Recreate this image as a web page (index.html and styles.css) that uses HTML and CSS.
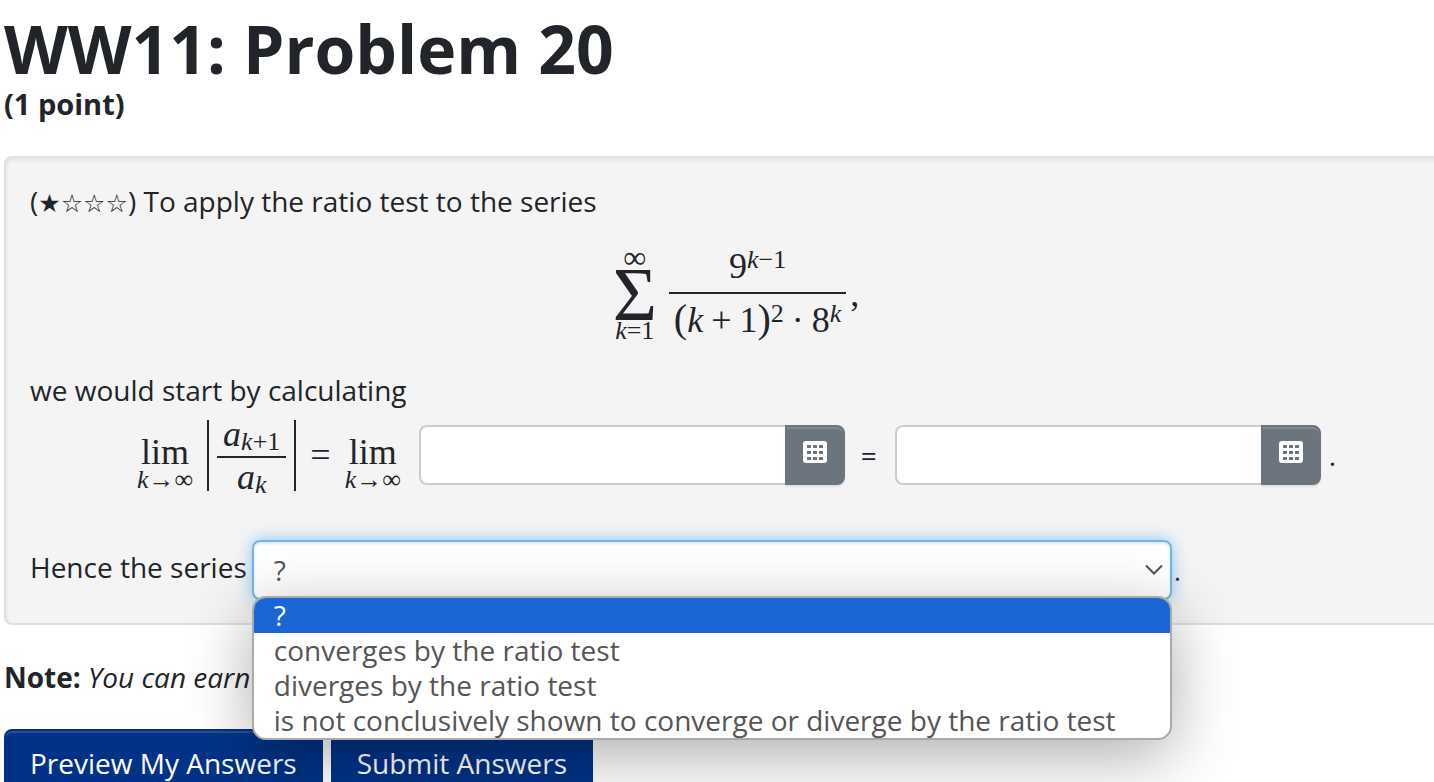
FILE: index.html
```html
<!DOCTYPE html>
<html lang="en">

<head>
  <meta charset="UTF-8" />
  <meta name="viewport" content="width=device-width, initial-scale=1.0" />
  <title>WW11: Problem 20</title>
  <link rel="stylesheet" href="styles.css">
</head>

<body>

  <main class="page">
    <h1 class="page-title">WW11: Problem 20</h1>
    <p class="points">(1 point)</p>

    <form id="problemForm">
      <section class="problem">
        <p>(<span class="stars">★☆☆☆</span>) To apply the ratio test to the series</p>

        <div class="equation" role="math">
          <span class="stack">
            <span class="limit infinity">∞</span>
            <span class="sigma">Σ</span>
            <span class="limit"><i>k</i>=1</span>
          </span>
          <span class="fraction series">
            <span class="numerator">9<sup><i>k</i>−1</sup></span>
            <span class="denominator"><span class="paren">(</span><i>k</i><span class="op">+</span>1<span class="paren">)</span><sup>2</sup><span class="op">·</span>8<sup><i>k</i></sup></span>
          </span>
          <span class="comma">,</span>
        </div>

        <p>we would start by calculating</p>

        <div class="answer-row">
          <span class="math" role="math">
            <span class="stack">
              <span class="lim">lim</span>
              <span class="limit"><i>k</i>→∞</span>
            </span>
            <span class="fraction ratio">
              <span class="numerator"><i>a</i><sub><i>k</i>+1</sub></span>
              <span class="denominator"><i>a</i><sub><i>k</i></sub></span>
            </span>
            <span class="equals">=</span>
            <span class="stack">
              <span class="lim">lim</span>
              <span class="limit"><i>k</i>→∞</span>
            </span>
          </span>
          <span class="input-group">
            <input type="text" id="answer1" aria-label="answer 1" autocomplete="off">
            <button type="button" class="keypad" aria-label="equation editor 1">
              <svg viewBox="0 0 24 22" width="24" height="22"><rect width="24" height="22" rx="3" fill="#fff" /><path d="M4 5.5h4M10 5.5h4M16 5.5h4M4 11.5h4M10 11.5h4M16 11.5h4M4 17.5h4M10 17.5h4M16 17.5h4" stroke="#6c757d" stroke-width="3" /></svg>
            </button>
          </span>
          <span class="between">=</span>
          <span class="input-group">
            <input type="text" id="answer2" aria-label="answer 2" autocomplete="off">
            <button type="button" class="keypad" aria-label="equation editor 2">
              <svg viewBox="0 0 24 22" width="24" height="22"><rect width="24" height="22" rx="3" fill="#fff" /><path d="M4 5.5h4M10 5.5h4M16 5.5h4M4 11.5h4M10 11.5h4M16 11.5h4M4 17.5h4M10 17.5h4M16 17.5h4" stroke="#6c757d" stroke-width="3" /></svg>
            </button>
          </span>
          <span class="period">.</span>
        </div>

        <div class="choice-row">
          <label for="answer3">Hence the series</label>
          <div class="select-wrap">
            <select id="answer3" class="choice">
              <option>?</option>
              <option>converges by the ratio test</option>
              <option>diverges by the ratio test</option>
              <option>is not conclusively shown to converge or diverge by the ratio test</option>
            </select>
            <svg class="chevron" viewBox="0 0 18 12" width="18" height="12"><path d="M1 1.5l8 8 8-8" fill="none" stroke="#555" stroke-width="2" /></svg>
            <ul class="menu" role="listbox">
              <li class="selected" role="option" aria-selected="true">?</li>
              <li role="option">converges by the ratio test</li>
              <li role="option">diverges by the ratio test</li>
              <li role="option">is not conclusively shown to converge or diverge by the ratio test</li>
            </ul>
          </div>
          <span>.</span>
        </div>
      </section>

      <p class="note"><b>Note:</b> <em>You can earn</em></p>

      <div class="buttons">
        <button type="submit" class="btn">Preview My Answers</button>
        <button type="submit" class="btn">Submit Answers</button>
      </div>
    </form>
  </main>

</body>

</html>
```
FILE: styles.css
```css
:root {
  --text: #212529;
  --panel: #f4f4f4;
  --border: #e0e0e0;
  --input-border: #ccc;
  --primary: #003388;
  --secondary: #6c757d;
  --focus: #70b5ef;
}

* {
  box-sizing: border-box;
}

body {
  margin: 0;
  overflow: hidden;
  background: #fff;
  color: var(--text);
  font-family: "Open Sans", "Noto Sans", sans-serif;
  font-size: 28px;
  line-height: 44px;
}

p {
  margin: 0;
}

.page {
  padding: 12px 0 0 4px;
}

.page-title {
  margin: 0;
  font-size: 66px;
  line-height: 72px;
  font-weight: 700;
}

.points {
  font-size: 29px;
  line-height: 40px;
  font-weight: 700;
}

/* the panel runs on past the right edge of the window */
.problem {
  margin: 32px -34px 0 0;
  padding: 21px 24px 23px;
  background: var(--panel);
  border: 2px solid var(--border);
  border-radius: 8px;
  box-shadow: inset 0 2px 4px rgba(0, 0, 0, 0.08);
}

.stars {
  font-family: "DejaVu Sans", sans-serif;
  font-size: 25px;
}

.equation,
.math {
  display: flex;
  align-items: center;
  font-family: "Liberation Serif", serif;
  font-size: 36px;
  line-height: 36px;
}

.equation {
  justify-content: center;
  gap: 12px;
  height: 136px;
  margin-bottom: 6px;
}

.equation sup,
.math sub {
  font-size: 26px;
  line-height: 0;
}

.equation sup {
  vertical-align: 10px;
}

.math sub {
  vertical-align: -4px;
}

.stack {
  display: flex;
  flex-direction: column;
  align-items: center;
}

.limit {
  font-size: 26px;
  line-height: 24px;
}

.infinity {
  font-size: 32px;
}

.sigma {
  font-size: 76px;
  line-height: 50px;
}

.fraction {
  display: flex;
  flex-direction: column;
  text-align: center;
}

.series .numerator {
  padding-bottom: 8px;
  border-bottom: 2px solid;
}

.series .denominator {
  padding: 8px 5px 2px;
}

.paren {
  font-size: 40px;
  line-height: 0;
}

.op {
  padding: 0 8px;
}

.comma {
  margin-left: -8px;
}

.math {
  gap: 14px;
}

.math .stack {
  padding-top: 18px;
}

.lim {
  line-height: 32px;
}

.ratio {
  padding: 0 8px;
  border-left: 2px solid;
  border-right: 2px solid;
}

.ratio .numerator {
  padding: 0 6px 8px;
  border-bottom: 2px solid;
  line-height: 28px;
}

.ratio .denominator {
  padding-top: 5px;
  line-height: 28px;
}

.answer-row {
  display: flex;
  align-items: center;
  height: 86px;
  padding: 0 80px 0 107px;
}

.input-group {
  display: flex;
  flex: 0 1 426px;
  min-width: 0;
  height: 60px;
  margin-left: 18px;
}

.input-group input {
  flex: 1;
  min-width: 0;
  padding: 8px 12px;
  font: inherit;
  color: #555;
  background: #fff;
  border: 2px solid var(--input-border);
  border-right: 0;
  border-radius: 8px 0 0 8px;
}

.keypad {
  display: flex;
  flex: none;
  align-items: center;
  justify-content: center;
  width: 60px;
  padding: 0 0 6px;
  background: var(--secondary);
  border: 2px solid var(--secondary);
  border-radius: 0 8px 8px 0;
  box-shadow: inset 0 2px 0 rgba(255, 255, 255, 0.15), 0 2px 2px rgba(0, 0, 0, 0.08);
}

.between {
  margin-left: 16px;
}

.period {
  margin-left: 8px;
}

.choice-row {
  display: flex;
  align-items: center;
  gap: 2px;
  margin-top: 42px;
}

.choice-row label {
  margin-right: 3px;
  padding-bottom: 6px;
}

.select-wrap {
  position: relative;
  width: 920px;
}

.choice {
  display: block;
  width: 100%;
  height: 60px;
  padding: 0 20px;
  font: inherit;
  color: #555;
  background: #fff;
  border: 2px solid var(--focus);
  border-radius: 8px;
  box-shadow: inset 0 2px 3px rgba(0, 0, 0, 0.1), 0 0 16px rgba(82, 168, 236, 0.65);
  appearance: none;
  outline: none;
}

.chevron {
  position: absolute;
  top: 24px;
  right: 9px;
  pointer-events: none;
}

.menu {
  position: absolute;
  top: 100%;
  left: 0;
  z-index: 10;
  width: 100%;
  margin: -4px 0 0;
  padding: 0;
  overflow: hidden;
  list-style: none;
  line-height: 35px;
  color: #555;
  background: #fff;
  border: 2px solid #aaa;
  border-radius: 14px;
  box-shadow: 0 16px 64px rgba(0, 0, 0, 0.32);
}

.menu li {
  padding-left: 20px;
}

.menu .selected {
  color: #fff;
  background: #1a66d4;
}

.note {
  margin-top: 30px;
}

.buttons {
  display: flex;
  gap: 8px;
  margin-top: 30px;
}

.btn {
  height: 68px;
  padding: 0 24px;
  font: inherit;
  color: #fff;
  background: var(--primary);
  border: 2px solid var(--primary);
  border-radius: 8px;
  box-shadow: inset 0 2px 0 rgba(255, 255, 255, 0.15);
}
```
